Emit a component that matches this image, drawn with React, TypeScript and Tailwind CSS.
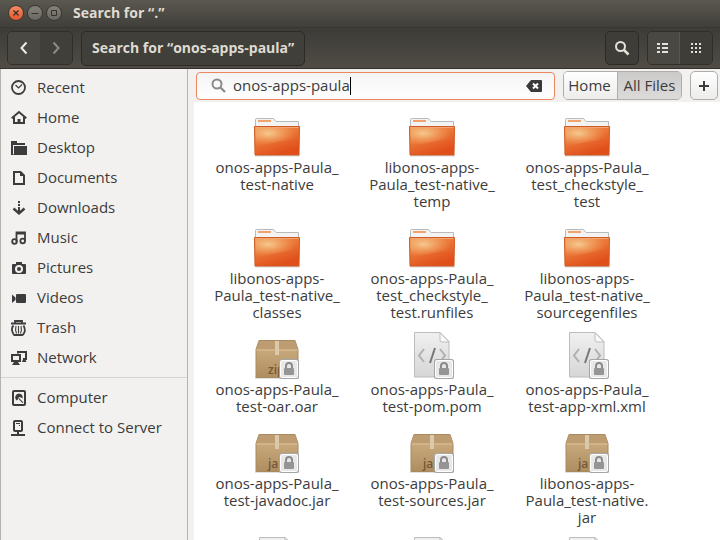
import React from 'react';
import { clsx } from 'clsx';

type FileKind = 'folder' | 'zip' | 'jar' | 'xml';

interface FileEntry {
  kind: FileKind;
  lines: string[];
}

interface Place {
  label: string;
  icon: React.ReactNode;
}

const places: Place[] = [
  {
    label: 'Recent',
    icon: (
      <>
        <circle cx="7.5" cy="7.5" r="6.5" fill="none" stroke="currentColor" strokeWidth="1.8" />
        <path d="M4.5 5l3 3 3.5-3.5" fill="none" stroke="currentColor" strokeWidth="1.2" />
      </>
    ),
  },
  {
    label: 'Home',
    icon: (
      <>
        <path d="M.7 8.3L8 2l7.3 6.3" fill="none" stroke="currentColor" strokeWidth="1.9" />
        <path d="M3 7v6h10V7" fill="none" stroke="currentColor" strokeWidth="2" />
        <path d="M6.5 14V9h3v5z" />
      </>
    ),
  },
  {
    label: 'Desktop',
    icon: (
      <>
        <path d="M0 1h6v2h8v2H2v10H0z" />
        <path d="M3 6h13v9H1.500l1.500-1z" />
      </>
    ),
  },
  {
    label: 'Documents',
    icon: (
      <>
        <path d="M3 2h6.5L13 5.5V14H3z" fill="none" stroke="currentColor" strokeWidth="2" />
        <path d="M9 2v4h4z" />
      </>
    ),
  },
  {
    label: 'Downloads',
    icon: (
      <>
        <path d="M7 1h2v2H7zM7 4h2v2H7zM7 7h2v6H7z" />
        <path d="M2.5 8.5L8 13.5l5.5-5" fill="none" stroke="currentColor" strokeWidth="2.4" />
      </>
    ),
  },
  {
    label: 'Music',
    icon: (
      <>
        <path d="M5.500 12V2.500H14V11M6 3.500h8" fill="none" stroke="currentColor" strokeWidth="1.800" />
        <circle cx="3.5" cy="11.5" r="2.3" fill="none" stroke="currentColor" strokeWidth="1.800" />
        <circle cx="11.7" cy="11" r="2.3" fill="none" stroke="currentColor" strokeWidth="1.800" />
      </>
    ),
  },
  {
    label: 'Pictures',
    icon: (
      <path
        fillRule="evenodd"
        d="M5 2h6v2h3q1 0 1 1v8q0 1-1 1H2q-1 0-1-1V5q0-1 1-1h3zM8 5a4 4 0 100 8 4 4 0 000-8zm0 2a2 2 0 110 4 2 2 0 010-4z"
      />
    ),
  },
  {
    label: 'Videos',
    icon: <path d="M5 5q0-1 1-1h8q1 0 1 1v7q0 1-1 1H6q-1 0-1-1zM1 4.500l3.5 3v2.500L1 13z" />,
  },
  {
    label: 'Trash',
    icon: (
      <>
        <path d="M0 3.500h15M4 3V1h7v2" fill="none" stroke="currentColor" strokeWidth="1.8" />
        <path
          d="M2.500 5.500Q0 8 1.500 12T4 15h7q1.500 0 2.500-3T12.500 5.500"
          fill="none"
          stroke="currentColor"
          strokeWidth="1.8"
        />
        <path
          d="M5 6q-1 3.500 .5 7.500M7.500 6v7.500M10 6q1 3.500-.5 7.500"
          fill="none"
          stroke="currentColor"
          strokeWidth="1.1"
        />
      </>
    ),
  },
  {
    label: 'Network',
    icon: (
      <>
        <path d="M7 3.500V2h8v7h-3" fill="none" stroke="currentColor" strokeWidth="2" />
        <path d="M1 5h8v6H1z" fill="none" stroke="currentColor" strokeWidth="2" />
        <path d="M3 12h4l2 3H1zM12 9h2l1.500 3H11z" />
      </>
    ),
  },
];

const devices: Place[] = [
  {
    label: 'Computer',
    icon: (
      <>
        <rect x="2" y="1" width="12" height="14" rx="1" fill="none" stroke="currentColor" strokeWidth="2" />
        <path d="M8 3.500a3.800 3.800 0 00-2 7L7.500 8.500 8 7l2 .5 1.500 1A3.800 3.800 0 008 3.500zM8 8l4.500 4.500-1 .5L8 9.500z" />
      </>
    ),
  },
  {
    label: 'Connect to Server',
    icon: (
      <>
        <rect x="3" y="1" width="8" height="10" rx="1" fill="none" stroke="currentColor" strokeWidth="2" />
        <path d="M5 3h4v1H5zM8 5h1v1H8zM6 11h2v3H6zM0 14h14v2H0z" />
      </>
    ),
  },
];

const files: FileEntry[] = [
  { kind: 'folder', lines: ['onos-apps-Paula_', 'test-native'] },
  { kind: 'folder', lines: ['libonos-apps-', 'Paula_test-native_', 'temp'] },
  { kind: 'folder', lines: ['onos-apps-Paula_', 'test_checkstyle_', 'test'] },
  { kind: 'folder', lines: ['libonos-apps-', 'Paula_test-native_', 'classes'] },
  { kind: 'folder', lines: ['onos-apps-Paula_', 'test_checkstyle_', 'test.runfiles'] },
  { kind: 'folder', lines: ['libonos-apps-', 'Paula_test-native_', 'sourcegenfiles'] },
  { kind: 'zip', lines: ['onos-apps-Paula_', 'test-oar.oar'] },
  { kind: 'xml', lines: ['onos-apps-Paula_', 'test-pom.pom'] },
  { kind: 'xml', lines: ['onos-apps-Paula_', 'test-app-xml.xml'] },
  { kind: 'jar', lines: ['onos-apps-Paula_', 'test-javadoc.jar'] },
  { kind: 'jar', lines: ['onos-apps-Paula_', 'test-sources.jar'] },
  { kind: 'jar', lines: ['libonos-apps-', 'Paula_test-native.', 'jar'] },
  { kind: 'xml', lines: [] },
  { kind: 'xml', lines: [] },
  { kind: 'xml', lines: [] },
];

const IconDefs = () => (
  <svg className="absolute size-0" aria-hidden="true">
    <defs>
      <linearGradient id="folder" x1="0" y1="0" x2="0.5" y2="1">
        <stop offset="0" stopColor="#ee9a58" />
        <stop offset="0.5" stopColor="#ea7436" />
        <stop offset="1" stopColor="#e04e1a" />
      </linearGradient>
      <radialGradient id="shine" cx="0.3" cy="0.3" r="0.65">
        <stop offset="0" stopColor="#f5c98e" />
        <stop offset="1" stopColor="#f3a765" stopOpacity="0" />
      </radialGradient>
      <linearGradient id="carton" x1="0" y1="0" x2="0" y2="1">
        <stop offset="0.2" stopColor="#c9aa7e" />
        <stop offset="1" stopColor="#ae8e60" />
      </linearGradient>
      <linearGradient id="paper" x1="0" y1="0" x2="0" y2="1">
        <stop offset="0" stopColor="#f0f0f0" />
        <stop offset="1" stopColor="#d6d6d6" />
      </linearGradient>
    </defs>
  </svg>
);

const LockEmblem = () => (
  <g>
    <rect x="26" y="27" width="20" height="20" rx="2.500" fill="#a5a5a5" />
    <rect x="27" y="28" width="18" height="18" rx="2" fill="#fff" />
    <rect x="28" y="29" width="16" height="16" rx="1" fill="#e8e8e8" />
    <path d="M33 36.500V34a3 3 0 016 0v2.500" fill="none" stroke="#8b8b8b" strokeWidth="2" />
    <rect x="31" y="36" width="10" height="7" rx="1" fill="#959595" />
  </g>
);

const FolderArt = () => (
  <>
    <path d="M2 45h45v1.500H2z" fill="#000" opacity="0.15" />
    <path d="M2.500 20V9.500q0-1 1-1h17l2.500 3h22.500v8z" fill="#f3f3f3" stroke="#b9b9b9" />
    <path d="M5 10h13v2H5z" fill="#f0a36c" />
    <path d="M1.500 16.500h45L46 45H2z" fill="url(#folder)" stroke="#cf5a22" />
    <path d="M2.500 17.500h43V29Q24 31 2.500 37z" fill="url(#shine)" />
    <path d="M2.500 17.500h43" stroke="#f2a472" fill="none" />
  </>
);

const CartonArt = ({ tag }: { tag: string }) => (
  <>
    <path d="M2 44h44v3H2z" fill="#000" opacity="0.12" />
    <path d="M6 8.500h36l3 9v27.500q0 .5-.5.5h-41q-.5 0-.5-.5v-27.500z" fill="url(#carton)" stroke="#a88a5e" />
    <path d="M6 9h36l2.500 8.500h-41z" fill="#bd9c72" />
    <path d="M3.500 18h41" stroke="#dcc298" fill="none" />
    <path d="M22 9h4v14h-4z" fill="#dcc9ab" />
    <text x="15" y="42" fontSize="12" fontWeight="600" fill="#74593a" className="font-['Open_Sans',sans-serif]">
      {tag}
    </text>
    <LockEmblem />
  </>
);

const XmlArt = () => (
  <>
    <path d="M6.500 .5H32l9 9v35.500H6.500z" fill="url(#paper)" stroke="#bcbcbc" />
    <path d="M32 .5l9 9.500h-7q-2 0-2-2z" fill="#fafafa" stroke="#bcbcbc" />
    <path d="M16 17l-5 6.500 5 6.500M32 17l5 6.500-5 6.500" fill="none" stroke="#b0b0b0" strokeWidth="2" />
    <path d="M27 16l-5 15" fill="none" stroke="#777" strokeWidth="2" />
    <LockEmblem />
  </>
);

const FileArt = ({ kind }: { kind: FileKind }) => (
  <svg viewBox="0 0 48 48" className="size-12" aria-hidden="true">
    {kind === 'folder' && <FolderArt />}
    {kind === 'zip' && <CartonArt tag="zip" />}
    {kind === 'jar' && <CartonArt tag="jar" />}
    {kind === 'xml' && <XmlArt />}
  </svg>
);

const FileItem = ({ file }: { file: FileEntry }) => (
  <button type="button" className="flex flex-col items-center justify-start gap-px text-[15px] leading-[17px]">
    <FileArt kind={file.kind} />
    <span>
      {file.lines.map((line) => (
        <span key={line} className="block">
          {line}
        </span>
      ))}
    </span>
  </button>
);

const PlaceLink = ({ place }: { place: Place }) => (
  <li>
    <a href="#" className="flex h-[30px] items-center gap-2.5 pl-2.5">
      <svg viewBox="0 0 16 16" className="size-4 fill-current" aria-hidden="true">
        {place.icon}
      </svg>
      <span className="pb-0.5">{place.label}</span>
    </a>
  </li>
);

const WindowButton = ({ label, close, children }: { label: string; close?: boolean; children: React.ReactNode }) => (
  <button
    type="button"
    aria-label={label}
    className={clsx(
      'size-4 rounded-full border border-[#3a3833]',
      close ? 'bg-linear-to-b from-[#f58a64] to-[#e2562a]' : 'bg-linear-to-b from-[#85827a] to-[#6a6861]'
    )}
  >
    <svg viewBox="0 0 14 14" className="size-3.5 fill-none stroke-[#33312d]" aria-hidden="true">
      {children}
    </svg>
  </button>
);

export default function App() {
  return (
    <div className="flex h-screen flex-col overflow-hidden bg-[#f2f1f0] font-['Open_Sans','Noto_Sans',sans-serif] text-[15px] text-[#3c3c3c]">
      <IconDefs />
      <header className="text-[#dfdbd2]">
        <div className="flex h-[27px] items-center gap-[3px] bg-linear-to-b from-[#5b5850] to-[#403f3a] pr-3 pb-0.5 pl-2">
          <WindowButton label="Close" close>
            <path d="M4.500 4.500l5 5M9.500 4.500l-5 5" strokeWidth="1.300" />
          </WindowButton>
          <WindowButton label="Minimize">
            <path d="M3.500 7.500h7" />
          </WindowButton>
          <WindowButton label="Maximize">
            <path d="M4.500 4.500h5v5h-5z" />
          </WindowButton>
          <h1 className="pl-2 text-[14px] font-bold">Search for “.”</h1>
        </div>
        <div className="flex h-[42px] items-center gap-2 border-t border-b border-t-[#383733] border-b-[#33312d] bg-linear-to-b from-[#3d3c38] to-[#504c45] px-[7px]">
          <div className="flex h-[34px] overflow-hidden rounded-[5px] border border-[#2f2e2a]">
            <button type="button" aria-label="Back" className="flex w-8 items-center justify-center bg-[#4a4842]">
              <svg viewBox="0 0 16 16" className="size-4 fill-none stroke-[#eeebe3] stroke-2" aria-hidden="true">
                <path d="M10.500 2.500L5.500 8l5 5.500" />
              </svg>
            </button>
            <button type="button" aria-label="Forward" className="flex w-8 items-center justify-center bg-[#403f3a]">
              <svg viewBox="0 0 16 16" className="size-4 fill-none stroke-[#8d8a82] stroke-2" aria-hidden="true">
                <path d="M5.500 2.500l5 5.500-5 5.500" />
              </svg>
            </button>
          </div>
          <button
            type="button"
            className="h-[35px] rounded-[5px] border border-[#2b2a27] bg-[#403f3a] px-2.5 pb-0.5 text-[14px] font-bold whitespace-nowrap"
          >
            Search for “onos-apps-paula”
          </button>
          <button
            type="button"
            aria-label="Search"
            className="ml-auto flex h-[34px] w-[34px] items-center justify-center rounded-[5px] border border-[#2b2a27] bg-[#3e3d38]"
          >
            <svg viewBox="0 0 16 16" className="size-4 fill-none stroke-[#e6e2da]" aria-hidden="true">
              <circle cx="6.500" cy="6.500" r="4.500" strokeWidth="2" />
              <path d="M10 10l4.500 4.500" strokeWidth="2.500" />
            </svg>
          </button>
          <div className="flex h-[34px] overflow-hidden rounded-[5px] border border-[#2f2e2a]">
            <button
              type="button"
              aria-label="List view"
              className="flex w-8 items-center justify-center border-r border-[#5b5850] bg-[#4a4842] pr-0.5"
            >
              <svg viewBox="0 0 11 10" className="h-2.5 w-[11px] fill-[#e6e2da]" aria-hidden="true">
                <path d="M0 0h3v2H0zM5 0h6v2H5zM0 4h3v2H0zM5 4h6v2H5zM0 8h3v2H0zM5 8h6v2H5z" />
              </svg>
            </button>
            <button type="button" aria-label="Icon view" className="flex w-8 items-center justify-center bg-[#3e3d38]">
              <svg viewBox="0 0 10 10" className="size-2.5 fill-[#e6e2da]" aria-hidden="true">
                <path d="M0 0h2v2H0zM4 0h2v2H4zM8 0h2v2H8zM0 4h2v2H0zM4 4h2v2H4zM8 4h2v2H8zM0 8h2v2H0zM4 8h2v2H4zM8 8h2v2H8z" />
              </svg>
            </button>
          </div>
        </div>
      </header>
      <div className="flex min-h-0 flex-1">
        <nav className="w-[188px] shrink-0 border-r border-l border-[#b5b2ae]">
          <ul className="border-b border-[#d5d3d0] py-1">
            {places.map((place) => (
              <PlaceLink key={place.label} place={place} />
            ))}
          </ul>
          <ul className="py-[5px]">
            {devices.map((place) => (
              <PlaceLink key={place.label} place={place} />
            ))}
          </ul>
        </nav>
        <main className="flex min-w-0 flex-1 flex-col pl-1.5">
          <div className="flex h-[33px] shrink-0 items-center gap-2 pr-0.5 pl-0.5">
            <label className="flex h-7 min-w-0 flex-1 items-center rounded-[4px] border border-[#ee8660] bg-linear-to-b from-[#f4f4f4] to-white pr-3 pl-3.5">
              <svg viewBox="0 0 16 16" className="mr-1.5 size-4 shrink-0 fill-none stroke-[#8a8a8a]" aria-hidden="true">
                <circle cx="6" cy="6" r="4.500" strokeWidth="2" />
                <path d="M9.500 9.500l4.500 4.500" strokeWidth="2.300" />
              </svg>
              <input
                type="text"
                aria-label="Search files"
                defaultValue="onos-apps-paula"
                className="field-sizing-content min-w-0 outline-none"
              />
              <span className="h-[18px] w-px bg-black" />
              <button type="button" aria-label="Clear" className="ml-auto">
                <svg viewBox="0 0 16 12" className="h-3 w-4" aria-hidden="true">
                  <path d="M0 6l5-6h10q1 0 1 1v10q0 1-1 1H5z" fill="#3a3a3a" />
                  <path d="M7 3.500l5 5M12 3.500l-5 5" stroke="#fff" strokeWidth="2" />
                </svg>
              </button>
            </label>
            <div className="flex h-[29px] overflow-hidden rounded-[5px] border border-[#b0ada9] whitespace-nowrap">
              <button type="button" className="w-[53px] bg-linear-to-b from-white to-[#ececeb] pr-0.5 text-center">
                Home
              </button>
              <button
                type="button"
                className="w-16 border-l border-[#b0ada9] bg-linear-to-b from-[#cbcac9] to-[#dcdbda] text-center"
              >
                All Files
              </button>
            </div>
            <button
              type="button"
              aria-label="Add"
              className="flex h-[29px] w-7 items-center justify-center rounded-[5px] border border-[#b0ada9] bg-linear-to-b from-white to-[#ececeb]"
            >
              <svg viewBox="0 0 10 10" className="size-2.5 fill-[#3c3c3c]" aria-hidden="true">
                <path d="M4 0h2v4h4v2H6v4H4V6H0V4h4z" />
              </svg>
            </button>
          </div>
          <div className="grid min-h-0 flex-1 grid-cols-[repeat(auto-fill,154px)] content-start gap-x-px gap-y-[11px] overflow-hidden bg-white pt-2 pl-1.5">
            {files.map((file, index) => (
              <FileItem key={index} file={file} />
            ))}
          </div>
        </main>
      </div>
    </div>
  );
}
